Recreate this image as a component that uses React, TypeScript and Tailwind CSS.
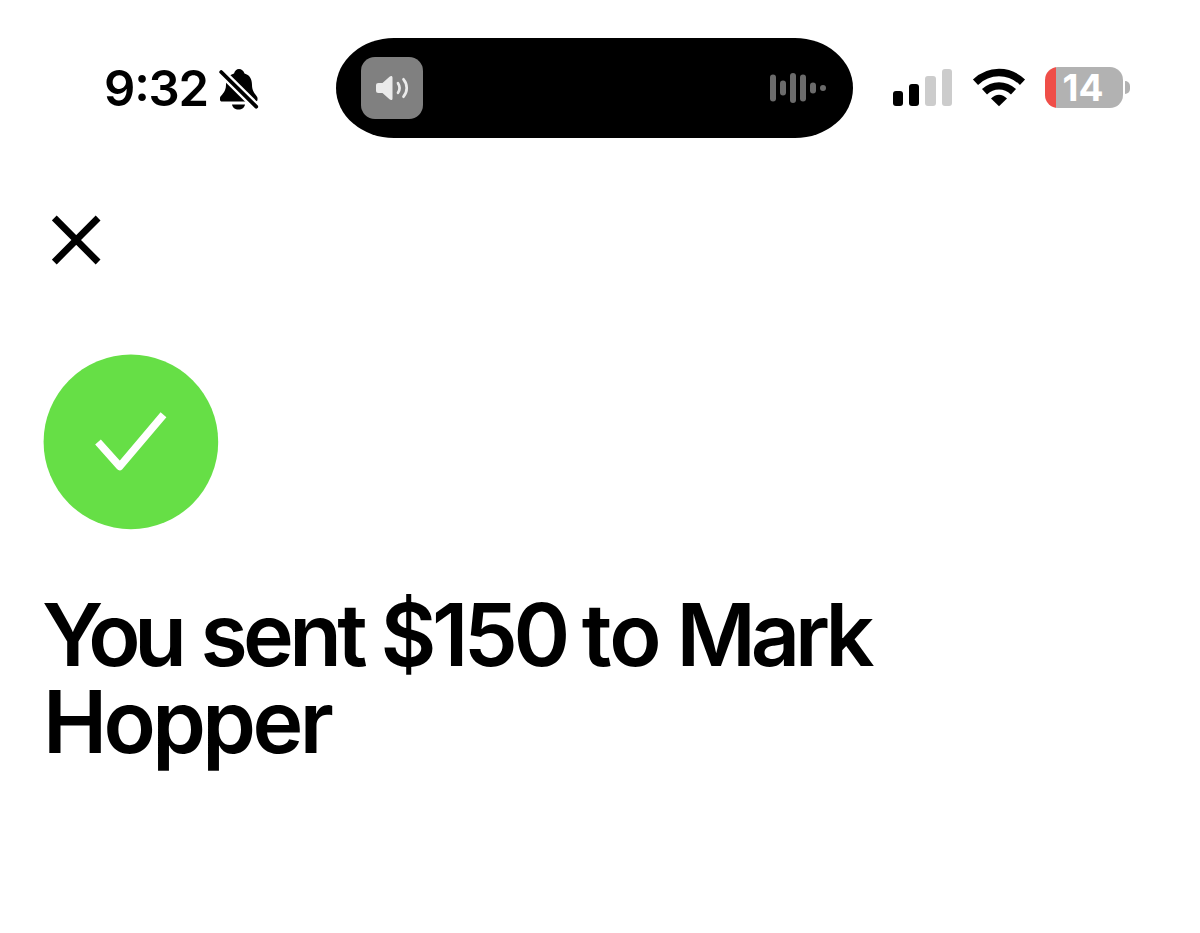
const waveform = [
  { x: 0, h: 27 },
  { x: 10, h: 15 },
  { x: 20, h: 30 },
  { x: 30, h: 27 },
  { x: 40, h: 11 },
  { x: 50, h: 6 },
];

function BellOff() {
  return (
    <svg width="40" height="42" viewBox="0 0 40 42" className="ml-[11px] mt-[3px]">
      <path
        d="M1 30.500V29c0-2.500 6-5 6-13C7 9.500 10 6 15 4.500 16 1.500 17.500 0 20 0s4.500 1.500 5.500 4.500C30.500 6 33 9.500 33 16c0 8 5.500 10.500 5.500 13v1.500c0 1.400-.8 2-2 2H3c-1.200 0-2-.6-2-2Z"
        fill="#000"
      />
      <path d="M13 35.500h13c-.5 3-3 5-6.500 5s-6-2-6.500-5Z" fill="#000" />
      <path d="M-2 -1.200 42 42.500" stroke="#fff" strokeWidth="8.400" />
      <path d="M2.200 3 37.200 37.700" stroke="#000" strokeWidth="3.800" strokeLinecap="round" />
    </svg>
  );
}

function Speaker() {
  return (
    <svg width="34" height="26" viewBox="0 0 34 26" fill="none">
      <path
        d="M3.500 8H7.500L14.500 1.700C16 .4 17.500 .8 17.500 2.500V23.500C17.500 25.200 16 25.600 14.500 24.300L7.500 18H3.500C1.800 18 1 17.200 1 15.500V10.500C1 8.800 1.800 8 3.500 8Z"
        fill="#ebebeb"
      />
      <path d="M23 8.200C25 11.200 25 14.800 23 17.800" stroke="#ebebeb" strokeWidth="2.700" strokeLinecap="round" />
      <path d="M28.500 4.300C32.800 9.500 32.800 16.500 28.500 21.700" stroke="#ebebeb" strokeWidth="2.700" strokeLinecap="round" />
    </svg>
  );
}

function Wifi() {
  return (
    <svg width="54" height="40" viewBox="0 0 54 40" fill="none" className="ml-5">
      <path d="M3.500 14.200C17 1.300 37 1.300 50.500 14.200" stroke="#000" strokeWidth="7.400" />
      <path d="M12.500 23.800C21 15.900 33 15.900 41.500 23.800" stroke="#000" strokeWidth="7.400" />
      <path d="M19 30.600C23.700 25.400 30.300 25.400 35 30.600L27 38.200Z" fill="#000" />
    </svg>
  );
}

function StatusBar() {
  return (
    <header className="flex h-[176px] items-center pl-[104px]">
      {/* Time */}
      <div className="flex w-[232px] items-center">
        <span className="w-[104px] whitespace-nowrap text-[49px] font-semibold leading-[49px] tracking-[-1.2px]">
          9<span className="align-[5px] leading-[0px]">:</span>32
        </span>
        <BellOff />
      </div>

      {/* Dynamic island */}
      <div className="flex h-[100px] w-[517px] items-center justify-between rounded-[58px/50px] bg-black pl-[25px] pr-[26px]">
        <div className="flex size-[62px] items-center justify-center rounded-[14px] bg-[#808080]">
          <Speaker />
        </div>
        <svg width="57" height="30" viewBox="0 0 57 30" fill="#6b6b6b">
          {waveform.map((bar) => (
            <rect key={bar.x} x={bar.x} y={15 - bar.h / 2} width="6" height={bar.h} rx="3" />
          ))}
        </svg>
      </div>

      {/* Signal */}
      <div className="-mt-px ml-[39.5px] flex h-[37px] items-end gap-[6px]">
        <div className="h-[15px] w-[10px] rounded-[3px] bg-black" />
        <div className="h-[22px] w-[10px] rounded-[3px] bg-black" />
        <div className="h-[30px] w-[11px] rounded-[3px] bg-[#cccccc]" />
        <div className="h-[37px] w-[10px] rounded-[3px] bg-[#cccccc]" />
      </div>
      <Wifi />

      {/* Battery */}
      <div className="-mt-px ml-[19.5px] flex items-center gap-[2px]">
        <div className="flex h-[41px] w-[78px] items-center rounded-[13px] bg-[linear-gradient(90deg,#ef4e48_11px,#b2b2b2_11px)] pl-[17.5px]">
          <span className="text-[37px] font-bold leading-[41px] text-white">14</span>
        </div>
        <div className="h-[13px] w-[5px] rounded-r-full bg-[#b2b2b2]" />
      </div>
    </header>
  );
}

export default function App() {
  return (
    <main className="h-[933px] w-[1200px] overflow-hidden bg-white font-['Inter',sans-serif] text-black">
      <StatusBar />

      <section className="flex flex-col items-start pl-[43px]">
        <button aria-label="Close" className="ml-[9px] mt-[39px]">
          <svg width="49" height="50" viewBox="0 0 49 50" className="block">
            <path d="M2.300 3 46.100 47M46.100 3 2.300 47" stroke="#000" strokeWidth="6.800" />
          </svg>
        </button>

        <svg width="176" height="176" viewBox="0 0 176 176" fill="none" className="mt-[89px]">
          <circle cx="87.900" cy="87.900" r="87.300" fill="#66df46" />
          <path
            d="M55 88 76.800 112.400 120.500 60.700"
            stroke="#fff"
            strokeWidth="7.600"
            strokeLinejoin="round"
          />
        </svg>

        <h1 className="-ml-px mt-[62px] text-[86px] font-semibold leading-[87px] tracking-[-4px]">
          <span className="mr-[2.5px] tracking-[-6.5px]">You</span>{" "}
          <span className="tracking-[-4.7px]">sent</span>{" "}
          <span className="-mr-[1.5px] tracking-[-4.500px]">$150</span>{" "}
          <span className="-mr-px tracking-[-2px]">to</span>{" "}
          <span className="tracking-[-5px]">Mark</span>
          <br />
          <span className="ml-px tracking-[-3.600px]">Hopper</span>
        </h1>
      </section>
    </main>
  );
}
